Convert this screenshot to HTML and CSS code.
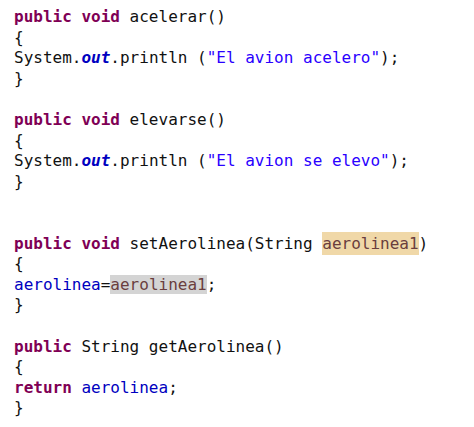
FILE: index.html
```html
<!DOCTYPE html>
<html>
<head>
<meta charset="utf-8">
<link rel="stylesheet" href="styles.css">
</head>
<body>
<pre class="code"><span class="kw">public</span> <span class="kw">void</span> acelerar()
{
System.<span class="st">out</span>.println (<span class="str">"El avion acelero"</span>);
}

<span class="kw">public</span> <span class="kw">void</span> elevarse()
{
System.<span class="st">out</span>.println (<span class="str">"El avion se elevo"</span>);
}


<span class="kw">public</span> <span class="kw">void</span> setAerolinea(String <span class="loc hl-write">aerolinea1</span>)
{
<span class="fld">aerolinea</span>=<span class="loc hl-read">aerolinea1</span>;
}

<span class="kw">public</span> String getAerolinea()
{
<span class="kw">return</span> <span class="fld">aerolinea</span>;
}</pre>
</body>
</html>
```
FILE: styles.css
```css
html, body {
  margin: 0;
  background: #ffffff;
}
.code {
  margin: 0;
  padding: 7px 0 0 14px;
  font-family: "DejaVu Sans Mono", "Liberation Mono", monospace;
  font-size: 16px;
  line-height: 20.6px;
  color: #111111;
}
.kw {
  color: #7f0055;
  font-weight: bold;
}
.st {
  color: #0000c0;
  font-weight: bold;
  font-style: italic;
}
.str {
  color: #2a00ff;
}
.fld {
  color: #0000c0;
}
.loc {
  color: #6a3e3e;
}
.hl-write {
  background: #f0d8a8;
  padding: 2px 0;
}
.hl-read {
  background: #d4d4d4;
}
```
